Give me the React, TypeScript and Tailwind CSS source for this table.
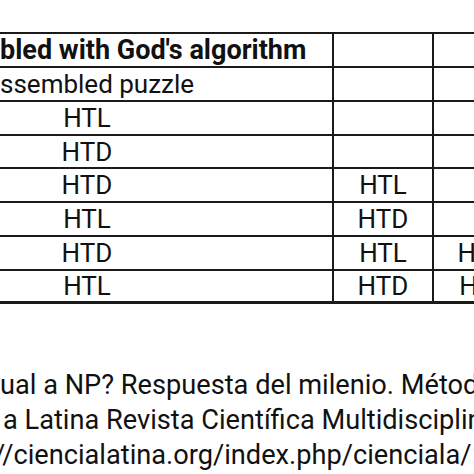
import React from "react";

const rows: { h: string; c1: string; c2: string; c3: string; kind: "head" | "left" | "center" }[] = [
  { h: "h-[32px]", c1: "bled with God's algorithm", c2: "", c3: "", kind: "head" },
  { h: "h-[32px]", c1: "ssembled puzzle", c2: "", c3: "", kind: "left" },
  { h: "h-[32px]", c1: "HTL", c2: "", c3: "", kind: "center" },
  { h: "h-[31px]", c1: "HTD", c2: "", c3: "", kind: "center" },
  { h: "h-[32px]", c1: "HTD", c2: "HTL", c3: "", kind: "center" },
  { h: "h-[32px]", c1: "HTL", c2: "HTD", c3: "", kind: "center" },
  { h: "h-[32px]", c1: "HTD", c2: "HTL", c3: "HTD", kind: "center" },
  { h: "h-[30px]", c1: "HTL", c2: "HTD", c3: "HTL", kind: "center" },
];

export default function App() {
  return (
    <div className="w-[474px] h-[474px] bg-white overflow-hidden text-[#111]" style={{ fontFamily: "Roboto, 'Liberation Sans', sans-serif" }}>
      <div className="pt-[32px]">
        <div className="w-[540px] border-t-2 border-[#1a1a1a]">
          {rows.map((r, i) => (
            <div
              key={i}
              className={`flex ${r.h} ${i === rows.length - 1 ? "border-b-[3px]" : "border-b-2"} border-[#1a1a1a] box-content`}
            >
              <div
                className={`w-[332px] shrink-0 flex items-center ${
                  r.kind === "head"
                    ? "pl-[0px] font-bold text-[27px]"
                    : r.kind === "left"
                    ? "pl-[0px] text-[26px]"
                    : "justify-center pr-[158px] text-[26px]"
                } whitespace-nowrap leading-none`}
              >
                {r.c1}
              </div>
              <div className="w-[100px] shrink-0 border-l-2 border-[#1a1a1a] flex items-center justify-center text-[26px] leading-none">
                {r.c2}
              </div>
              <div className="w-[100px] shrink-0 border-l-2 border-[#1a1a1a] flex items-center justify-center text-[26px] leading-none">
                {r.c3}
              </div>
            </div>
          ))}
        </div>
      </div>
      <div className="mt-[64px] text-[27.2px] leading-[35px] whitespace-nowrap">
        <div>ual a NP? Respuesta del milenio. Método</div>
        <div className="pl-[3px]">a Latina Revista Científica Multidisciplinar</div>
        <div className="-ml-[6px]">//ciencialatina.org/index.php/cienciala/</div>
      </div>
    </div>
  );
}
